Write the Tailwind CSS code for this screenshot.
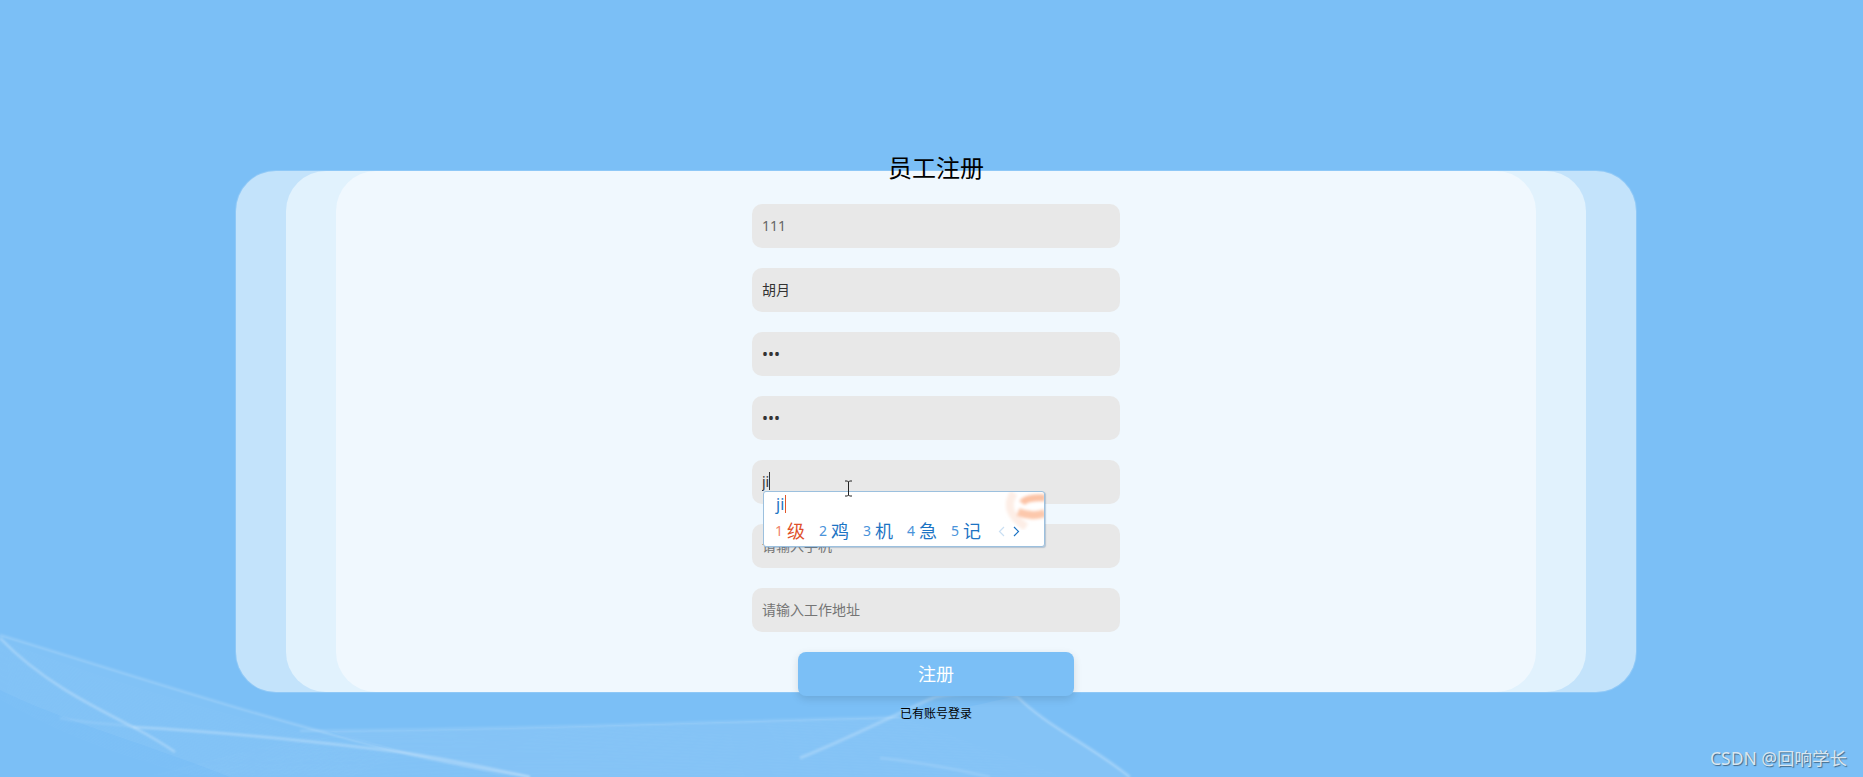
<!DOCTYPE html>
<html lang="zh-CN">
<head>
    <meta charset="UTF-8">
    <meta name="viewport" content="width=device-width, initial-scale=1.0">
    <title>员工注册</title>
    <script src="https://cdn.jsdelivr.net/npm/@tailwindcss/browser@4"></script>
</head>
<body class="relative h-[777px] overflow-hidden bg-[#7bbff6] font-['Noto_Sans','Noto_Sans_CJK_SC',sans-serif]">
    <!-- background waves -->
    <svg class="absolute inset-0" width="1863" height="777" viewBox="0 0 1863 777" fill="none">
        <defs>
            <filter id="soft" x="-5%" y="-20%" width="110%" height="140%"><feGaussianBlur stdDeviation="1"/></filter>
        </defs>
        <g id="mesh" stroke="#fff" stroke-width="0.5" stroke-opacity="0.03"></g>
        <path d="M0 635C100 665 250 715 400 752C440 762 470 768 500 777L230 777C150 745 60 720 0 690Z" fill="#fff" fill-opacity="0.05"/>
        <path d="M330 731C500 730 700 722 900 717C950 712 990 702 1017 696C1045 725 1090 745 1130 777L500 777C470 768 440 762 400 752C380 745 350 738 330 731Z" fill="#fff" fill-opacity="0.07"/>
        <g filter="url(#soft)">
            <path d="M0 635C100 665 250 715 400 752C450 765 500 772 530 777" stroke="#fff" stroke-opacity="0.26" stroke-width="1.6"/>
            <path d="M0 638C40 680 90 705 133 727C150 736 165 745 175 752" stroke="#fff" stroke-opacity="0.28" stroke-width="2.5"/>
            <path d="M60 718C90 724 120 724 133 727" stroke="#fff" stroke-opacity="0.12" stroke-width="2"/>
            <path d="M133 727C240 733 320 742 400 752C440 758 480 766 530 777" stroke="#fff" stroke-opacity="0.28" stroke-width="2.5"/>
            <path d="M300 731C500 730 700 722 900 717" stroke="#fff" stroke-opacity="0.16" stroke-width="2"/>
            <path d="M800 758C850 738 900 712 935 697C960 692 990 692 1017 696" stroke="#fff" stroke-opacity="0.22" stroke-width="3"/>
            <path d="M1017 696C1045 725 1090 745 1130 777" stroke="#fff" stroke-opacity="0.28" stroke-width="2.5"/>
            <path d="M880 758C920 762 960 770 990 777" stroke="#fff" stroke-opacity="0.14" stroke-width="2.5"/>
        </g>
    </svg>

    <main class="relative pt-[171px]">
        <!-- stacked cards -->
        <div class="ml-[236px] h-[521px] w-[1400px] rounded-[40px] bg-[#c3e3fb] px-[50px] shadow-[0_0_0_1px_rgb(255_255_255/0.15)]">
            <div class="h-full rounded-[40px] bg-[#e1f2fd] px-[50px]">
                <div class="h-full rounded-[40px] bg-[#f0f8fe]">
                    <form class="flex flex-col items-center">
                        <h1 class="-mt-[19px] text-2xl leading-8 text-black">员工注册</h1>
                        <div class="mt-5 flex w-[368px] flex-col gap-5">
                            <input type="text" value="111" class="h-11 w-full rounded-[10px] bg-[#e8e8e8] pb-0.5 pl-2.5 text-sm text-[#666] outline-none">
                            <input type="text" value="胡月" class="h-11 w-full rounded-[10px] bg-[#e8e8e8] pb-0.5 pl-2.5 text-sm text-[#333] outline-none">
                            <input type="password" value="123" class="h-11 w-full rounded-[10px] bg-[#e8e8e8] pl-2.5 text-base text-[#333] outline-none">
                            <input type="password" value="123" class="h-11 w-full rounded-[10px] bg-[#e8e8e8] pl-2.5 text-base text-[#333] outline-none">
                            <div class="relative">
                                <input type="text" value="ji" class="h-11 w-full rounded-[10px] bg-[#e8e8e8] pb-0.5 pl-2.5 text-sm text-[#333] outline-none">
                                <span class="absolute left-[17px] top-3 h-[18px] w-px bg-[#333]"></span>
                                <!-- input method popup -->
                                <div class="absolute left-[11px] top-[31px] z-10 h-14 w-[282px] overflow-hidden rounded-[3px] border border-[#9cc0de] bg-white shadow-[1px_1px_1px_rgb(90_130_170/0.35)]">
                                    <svg class="absolute right-0 top-0" width="40" height="38" viewBox="0 0 40 38" fill="none">
                                        <defs>
                                            <filter id="glow" x="-20%" y="-20%" width="140%" height="140%"><feGaussianBlur stdDeviation="1.8"/></filter>
                                        </defs>
                                        <g filter="url(#glow)">
                                            <path d="M10 1C2 12 5 24 22 35" stroke="#fdeee6" stroke-width="8"/>
                                            <path d="M41 6C30 5 21 7 18 11" stroke="#fcc2a4" stroke-width="7"/>
                                            <path d="M41 21C33 24 24 24 14 20" stroke="#fcc8ac" stroke-width="8"/>
                                        </g>
                                    </svg>
                                    <div class="relative flex h-6 items-center pl-3 text-base text-[#1d74c4]">
                                        <span>ji</span><span class="ml-px h-[18px] w-px bg-[#e2572b]"></span>
                                    </div>
                                    <div class="relative mt-px flex items-center gap-3.5 pl-[11px] leading-6">
                                        <span class="flex items-center gap-1 text-lg text-[#e0502a]"><i class="text-sm not-italic text-[#f0836a]">1</i>级</span>
                                        <span class="flex items-center gap-1 text-lg text-[#1d74c4]"><i class="text-sm not-italic text-[#4a93da]">2</i>鸡</span>
                                        <span class="flex items-center gap-1 text-lg text-[#1d74c4]"><i class="text-sm not-italic text-[#4a93da]">3</i>机</span>
                                        <span class="flex items-center gap-1 text-lg text-[#1d74c4]"><i class="text-sm not-italic text-[#4a93da]">4</i>急</span>
                                        <span class="flex items-center gap-1 text-lg text-[#1d74c4]"><i class="text-sm not-italic text-[#4a93da]">5</i>记</span>
                                        <svg class="ml-[3px]" width="7" height="11" viewBox="0 0 7 11" fill="none"><path d="M6 1L1.5 5.5L6 10" stroke="#c9dff3" stroke-width="1.2"/></svg>
                                        <svg class="-ml-1.5" width="7" height="11" viewBox="0 0 7 11" fill="none"><path d="M1 1L5.5 5.5L1 10" stroke="#1d74c4" stroke-width="1.2"/></svg>
                                    </div>
                                </div>
                                <!-- mouse cursor -->
                                <svg class="absolute left-[92px] top-[20px] z-20" width="9" height="17" viewBox="0 0 9 17" fill="none">
                                    <path d="M1 1H3.5L4.5 2L5.5 1H8M4.5 2V15M1 16H3.5L4.5 15L5.5 16H8" stroke="#222" stroke-width="1"/>
                                </svg>
                            </div>
                            <input type="text" placeholder="请输入手机" class="h-11 w-full rounded-[10px] bg-[#e8e8e8] pb-0.5 pl-2.5 text-sm outline-none placeholder:text-[#757575]">
                            <input type="text" placeholder="请输入工作地址" class="h-11 w-full rounded-[10px] bg-[#e8e8e8] pb-0.5 pl-2.5 text-sm outline-none placeholder:text-[#757575]">
                        </div>
                        <button type="button" class="mt-5 h-11 w-[276px] rounded-lg bg-[#7bbff6] text-lg text-white shadow-[0_3px_8px_rgb(0_0_0/0.12)]">注册</button>
                        <a href="#" class="mt-2.5 text-xs leading-4 text-black">已有账号登录</a>
                    </form>
                </div>
            </div>
        </div>
    </main>

    <div class="absolute bottom-[7px] right-[16px] text-[17.5px] leading-6 text-[#d9e6f0] [text-shadow:1px_1px_1px_rgb(0_0_0/0.45)]">CSDN @回响学长</div>

    <script>
        // fine line ribbons behind the cards, each one runs between two curves
        const ribbons = [
            [[0,640,100,680,250,725,400,755], [0,700,60,735,140,770,300,800]],
            [[330,731,520,730,720,722,900,717], [130,780,400,800,700,800,1100,790]],
        ];
        const mesh = document.getElementById("mesh");
        ribbons.forEach(([a, b]) => {
            for (let t = 0; t <= 1; t += 1 / 50) {
                const pts = a.map((v, i) => (v + (b[i] - v) * t).toFixed(1));
                const line = document.createElementNS("http://www.w3.org/2000/svg", "path");
                line.setAttribute("d", `M${pts[0]} ${pts[1]}C${pts.slice(2).join(" ")}`);
                mesh.appendChild(line);
            }
        });
    </script>
</body>
</html>
